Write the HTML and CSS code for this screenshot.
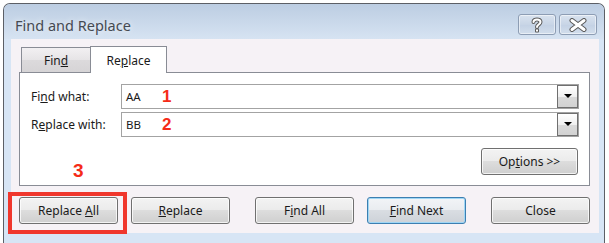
FILE: index.html
```html
<!DOCTYPE html>
<html>
<head>
<meta charset="utf-8">
<link rel="stylesheet" href="styles.css">
</head>
<body>
<div class="window">
  <div class="titlebar">
    <div class="title">Find and Replace</div>
    <div class="caption-btns">
      <div class="cap-btn">
        <svg width="14" height="16" viewBox="0 0 14 16">
          <path d="M3.5 5 C3.5 1.5 10.5 1.5 10.5 5 C10.5 7.5 7 7.5 7 10" fill="none" stroke="#5a5a5a" stroke-width="4" stroke-linecap="round"/>
          <path d="M3.5 5 C3.5 1.5 10.5 1.5 10.5 5 C10.5 7.5 7 7.5 7 10" fill="none" stroke="#ffffff" stroke-width="2" stroke-linecap="round"/>
          <rect x="5" y="11.5" width="4" height="4" rx="1" fill="#5a5a5a"/>
          <rect x="6" y="12.5" width="2" height="2" fill="#ffffff"/>
        </svg>
      </div>
      <div class="cap-btn">
        <svg width="18" height="14" viewBox="0 0 18 14">
          <path d="M3 2.5 L15 11.5 M15 2.5 L3 11.5" fill="none" stroke="#5a5a5a" stroke-width="5" stroke-linecap="round"/>
          <path d="M3 2.5 L15 11.5 M15 2.5 L3 11.5" fill="none" stroke="#ffffff" stroke-width="3" stroke-linecap="round"/>
        </svg>
      </div>
    </div>
  </div>
  <div class="frame">
    <div class="client">
      <div class="tabs">
        <div class="tab"><span>Fin<u>d</u></span></div>
        <div class="tab active"><span>Re<u>p</u>lace</span></div>
      </div>
      <div class="panel">
        <div class="fields">
          <div class="label">Fi<u>n</u>d what:</div>
          <div class="combo">
            <span class="value">AA</span><span class="num">1</span>
            <div class="drop"><span class="tri"></span></div>
          </div>
          <div class="label">R<u>e</u>place with:</div>
          <div class="combo">
            <span class="value">BB</span><span class="num">2</span>
            <div class="drop"><span class="tri"></span></div>
          </div>
        </div>
        <div class="opt-row">
          <div class="btn opt"><span>Op<u>t</u>ions &gt;&gt;</span></div>
        </div>
        <div class="num num3">3</div>
      </div>
      <div class="btn-row">
        <div class="group">
          <div class="btn"><span>Replace <u>A</u>ll</span></div>
          <div class="btn"><span><u>R</u>eplace</span></div>
        </div>
        <div class="group">
          <div class="btn"><span>F<u>i</u>nd All</span></div>
          <div class="btn default"><span><u>F</u>ind Next</span></div>
        </div>
        <div class="btn"><span>Close</span></div>
      </div>
    </div>
  </div>
  <div class="highlight"></div>
</div>
</body>
</html>
```
FILE: styles.css
```css
html, body {
  margin: 0;
  padding: 0;
  background: #ffffff;
  overflow: hidden;
}
body {
  width: 609px;
  height: 243px;
  font-family: "Noto Sans", "Open Sans", sans-serif;
  font-size: 12px;
  color: #1a1a1a;
}
u { text-decoration: underline; text-underline-offset: 1px; }

.window {
  position: relative;
  margin: 3px 0 0 3px;
  width: 600px;
  height: 250px;
  border: 1px solid #5c5f66;
  border-bottom: none;
  border-radius: 7px 7px 0 0;
  background: #d7e5f5;
  box-sizing: content-box;
}

.titlebar {
  height: 35px;
  display: flex;
  justify-content: space-between;
  border-radius: 6px 6px 0 0;
  background: linear-gradient(#bccde2 0%, #c9d8ea 50%, #d6e3f2 100%);
}
.title {
  padding: 11px 0 0 11px;
  font-size: 14.5px;
  color: #454a52;
  text-shadow: 0 0 6px rgba(255,255,255,0.9);
}
.caption-btns {
  display: flex;
  gap: 3px;
  padding: 10px 7px 0 0;
}
.cap-btn {
  width: 36px;
  height: 19px;
  border: 1px solid #8d9db4;
  border-radius: 3px;
  background: linear-gradient(#d9e3ef, #c8d5e6 50%, #c3d1e4 51%, #d2deec);
  display: flex;
  align-items: center;
  justify-content: center;
  box-shadow: inset 0 0 0 1px rgba(255,255,255,0.5);
}

.frame {
  padding: 0 5px 0 7px;
}
.client {
  background: #f6f2f6;
  height: 194px;
  padding: 8px 9px 0 8px;
  box-sizing: border-box;
}

.tabs {
  display: flex;
  align-items: flex-end;
  padding-left: 2px;
  height: 26px;
  margin-bottom: -1px;
  position: relative;
  z-index: 2;
}
.tab {
  width: 68px;
  height: 24px;
  border: 1px solid #898c95;
  background: linear-gradient(#f2f0f2, #e6e4e6 50%, #dcdadc 51%, #d6d4d6);
  text-align: center;
  line-height: 25px;
  box-sizing: content-box;
}
.tab.active {
  width: 75px;
  height: 26px;
  margin-left: -1px;
  background: #ffffff;
  border-bottom: none;
  line-height: 27px;
}

.panel {
  position: relative;
  background: #ffffff;
  border: 1px solid #898c95;
  padding: 11px 10px 10px 11px;
}
.fields {
  display: grid;
  grid-template-columns: 90px 1fr;
  row-gap: 3px;
  align-items: center;
}
.combo {
  position: relative;
  height: 23px;
  border: 1px solid #a3a3a3;
  display: flex;
  align-items: center;
  padding-left: 4px;
  font-size: 11.5px;
}
.value {
  width: 36px;
}
.num {
  color: #f52b18;
  font-weight: bold;
  font-size: 17px;
  font-family: "Liberation Sans", Arial, sans-serif;
}
.num3 {
  position: absolute;
  left: 53px;
  top: 87px;
  font-size: 19px;
}
.drop {
  position: absolute;
  right: 0;
  top: 0;
  width: 19px;
  height: 21px;
  border: 1px solid #6f6f6f;
  background: linear-gradient(#ffffff, #f0f0f0 50%, #dadada 51%, #d2d2d2);
  display: flex;
  justify-content: center;
  align-items: center;
}
.tri {
  width: 0;
  height: 0;
  border-left: 4px solid transparent;
  border-right: 4px solid transparent;
  border-top: 4px solid #000;
  margin-top: -1px;
}
.opt-row {
  display: flex;
  justify-content: flex-end;
  padding-top: 11px;
  padding-right: 1px;
}

.btn {
  width: 97px;
  height: 25px;
  border: 1px solid #707070;
  border-radius: 3px;
  background: linear-gradient(#f3f3f3, #ebebeb 48%, #dddddd 50%, #cfcfcf);
  box-shadow: inset 0 0 0 1px rgba(255,255,255,0.75);
  display: flex;
  align-items: center;
  justify-content: center;
  box-sizing: content-box;
}
.btn.opt {
  width: 95px;
}
.btn.default {
  border-color: #3c7fb1;
  box-shadow: inset 0 0 0 1px #9fd6f5;
  background: linear-gradient(#f2f4f7, #e9ecf0 48%, #d9dde2 50%, #cdd2d8);
}

.btn-row {
  display: flex;
  padding-top: 11px;
  gap: 25px;
}
.group {
  display: flex;
  gap: 13px;
}

.highlight {
  position: absolute;
  left: 4px;
  top: 188px;
  width: 111px;
  height: 34px;
  border: 4px solid #f0372d;
}
```
